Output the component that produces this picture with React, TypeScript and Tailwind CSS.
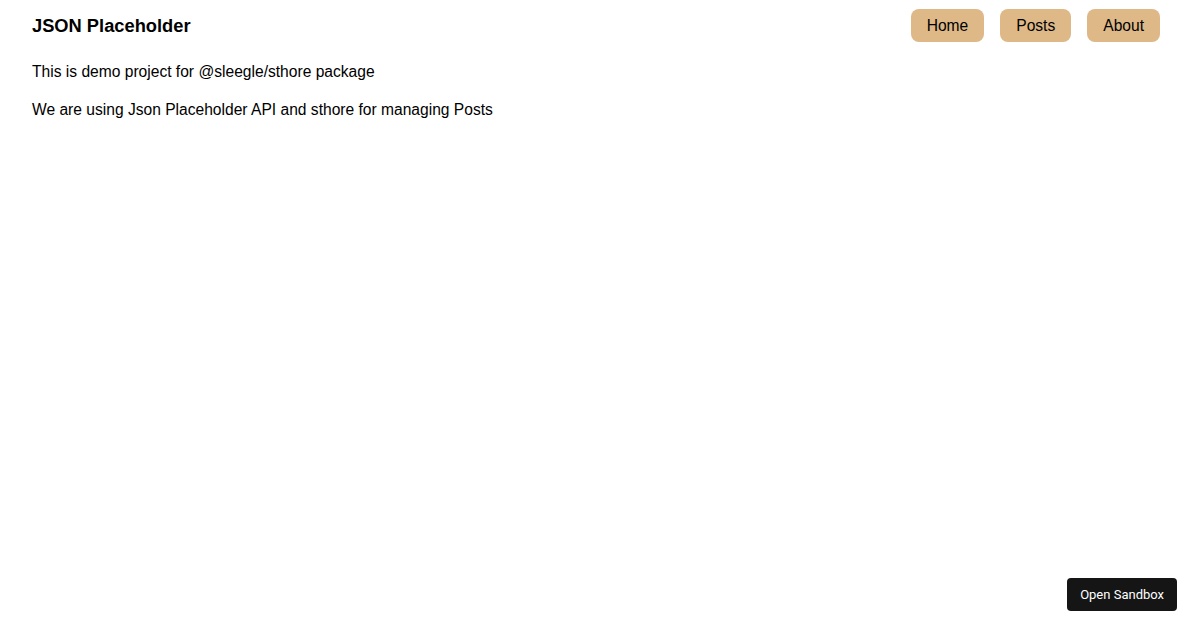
const links = ["Home", "Posts", "About"];

export default function App() {
  return (
    <div className="min-h-screen bg-white text-black font-['Liberation_Sans',Arial,sans-serif]">
      {/* Header */}
      <header className="flex items-center justify-between pl-8 pr-10 pt-[9px]">
        <h1 className="text-[18.3px] font-bold pt-[1px]">JSON Placeholder</h1>
        <nav className="flex gap-4">
          {links.map((l) => (
            <button
              key={l}
              className="h-[33px] px-4 rounded-lg bg-[#deb887] text-[15.6px] text-black"
            >
              {l}
            </button>
          ))}
        </nav>
      </header>

      {/* Content */}
      <main className="px-8 pt-[19px] text-[15.6px] leading-[22px]">
        <p>This is demo project for @sleegle/sthore package</p>
        <p className="mt-4">We are using Json Placeholder API and sthore for managing Posts</p>
      </main>

      <button className="fixed right-[23px] bottom-[19px] h-[33px] px-[13px] rounded bg-[#151515] text-white text-[13px] font-['Roboto',sans-serif]">
        Open Sandbox
      </button>
    </div>
  );
}
